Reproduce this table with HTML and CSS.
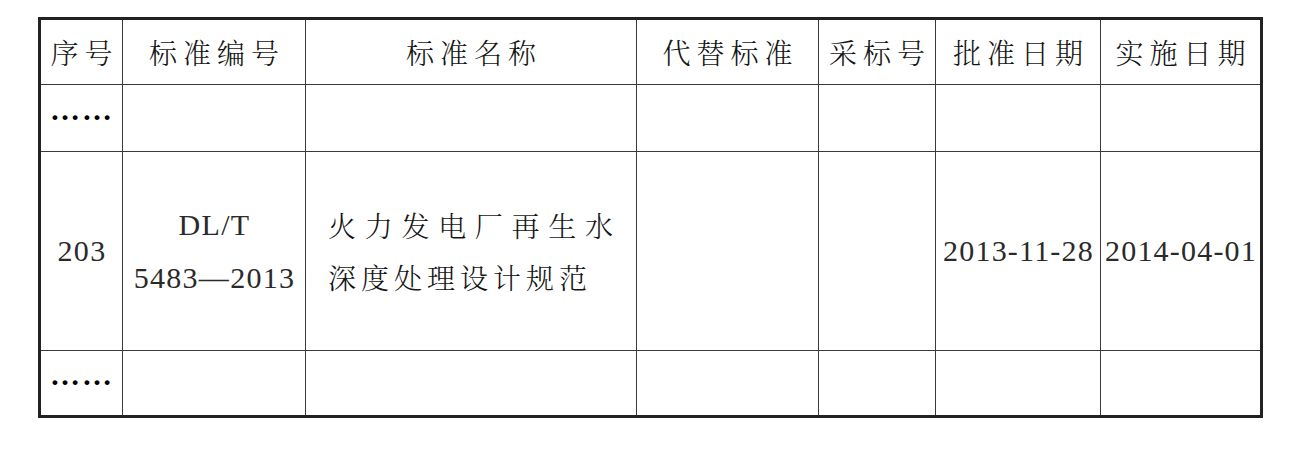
FILE: index.html
```html
<!DOCTYPE html>
<html lang="zh-CN">
<head>
<meta charset="utf-8">
<title>标准目录</title>
<link rel="stylesheet" href="styles.css">
</head>
<body>
<div class="page">
  <div class="grid" role="table">
    <div class="cell head" role="columnheader">序号</div>
    <div class="cell head" role="columnheader">标准编号</div>
    <div class="cell head" role="columnheader">标准名称</div>
    <div class="cell head" role="columnheader">代替标准</div>
    <div class="cell head" role="columnheader">采标号</div>
    <div class="cell head" role="columnheader">批准日期</div>
    <div class="cell head last-col" role="columnheader">实施日期</div>

    <div class="cell dots">……</div>
    <div class="cell"></div>
    <div class="cell"></div>
    <div class="cell"></div>
    <div class="cell"></div>
    <div class="cell"></div>
    <div class="cell last-col"></div>

    <div class="cell num">203</div>
    <div class="cell num code"><span>DL/T</span><span>5483—2013</span></div>
    <div class="cell name"><p>火力发电厂再生水深度处理设计规范</p></div>
    <div class="cell"></div>
    <div class="cell"></div>
    <div class="cell num date">2013-11-28</div>
    <div class="cell num date last-col">2014-04-01</div>

    <div class="cell dots last-row">……</div>
    <div class="cell last-row"></div>
    <div class="cell last-row"></div>
    <div class="cell last-row"></div>
    <div class="cell last-row"></div>
    <div class="cell last-row"></div>
    <div class="cell last-row last-col"></div>
  </div>
</div>
</body>
</html>
```

FILE: styles.css
```css
* {
  box-sizing: border-box;
}

html, body {
  margin: 0;
  padding: 0;
  background: #ffffff;
}

.page {
  padding: 17px 0 0 38px;
}

.grid {
  display: grid;
  width: 1225px;
  grid-template-columns: 82px 183px 331px 182px 117px 165px 159px;
  grid-template-rows: 65px 67px 199px 64px;
  border: 3px solid #222222;
  color: #141414;
  font-family: "Noto Serif CJK SC", "Noto Sans CJK SC", "Noto Sans CJK TC", sans-serif;
  font-weight: 300;
}

.cell {
  border-right: 1px solid #3a3a3a;
  border-bottom: 1px solid #3a3a3a;
  display: flex;
  align-items: center;
  justify-content: center;
}

.last-col {
  border-right: none;
}

.last-row {
  border-bottom: none;
}

.head {
  font-size: 28px;
  letter-spacing: 6px;
  padding-left: 6px;
  padding-bottom: 1px;
}

.dots {
  font-family: "Liberation Serif", serif;
  font-weight: bold;
  font-size: 30px;
  line-height: 30px;
  letter-spacing: 2px;
  padding-left: 1px;
  padding-bottom: 16px;
  color: #000;
}

.num {
  font-family: "Liberation Serif", "Times New Roman", serif;
  font-weight: normal;
  font-size: 30px;
  letter-spacing: 1.3px;
  padding-left: 1px;
  color: #2a2a2a;
}

.code {
  flex-direction: column;
  line-height: 53px;
}

.date {
  letter-spacing: 1.2px;
}

.name {
  justify-content: flex-start;
  padding: 0 18px 0 22px;
}

.name p {
  margin: 0;
  width: 100%;
  font-size: 28px;
  line-height: 52px;
  letter-spacing: 5px;
  text-align: justify;
}
```
